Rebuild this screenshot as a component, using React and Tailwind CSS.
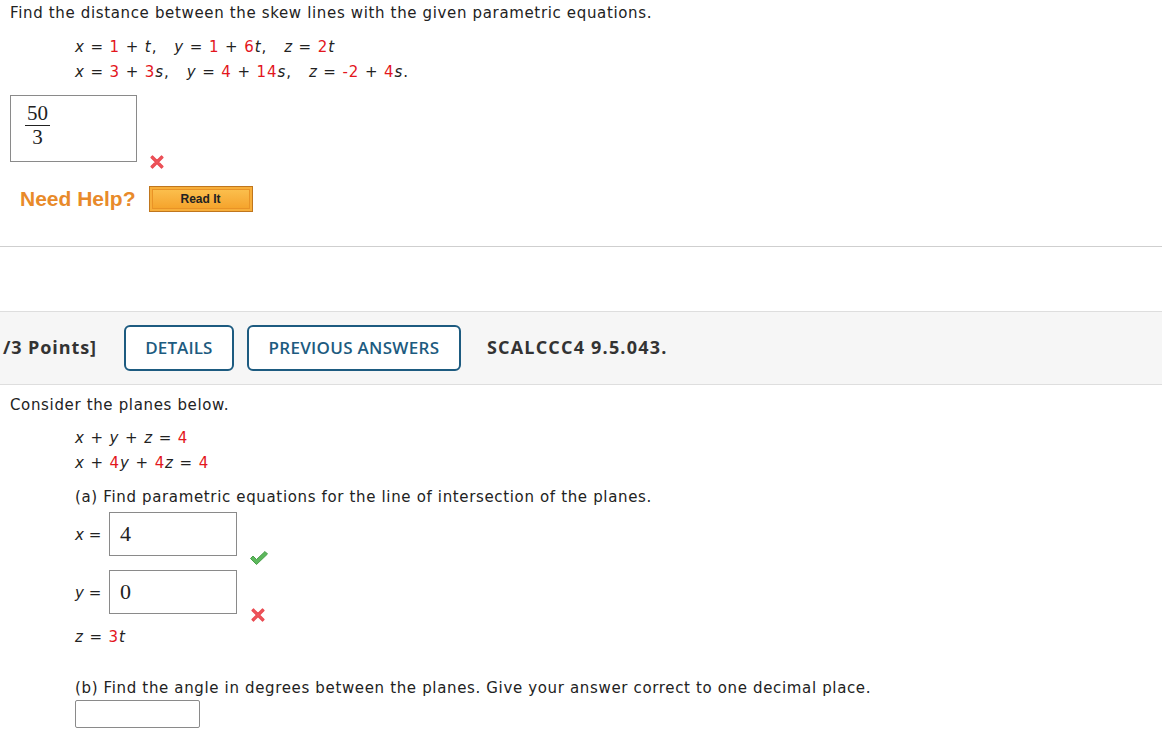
import React from "react";

const V = ({ children }) => <i className="italic">{children}</i>;
const R = ({ children }) => <span className="text-[#e3161d]">{children}</span>;

const Cross = ({ className }) => (
  <svg className={className} width="18" height="18" viewBox="0 0 18 18">
    <path d="M3 4.5 L4.5 3 L9 7.5 L13.5 3 L15 4.5 L10.5 9 L15 13.5 L13.5 15 L9 10.5 L4.5 15 L3 13.5 L7.5 9 Z" fill="#f0575e" stroke="#e94950" strokeWidth="1.2" strokeLinejoin="round" />
  </svg>
);

const Check = ({ className }) => (
  <svg className={className} width="20" height="16" viewBox="0 0 20 16">
    <path d="M1.5 8.5 L4 6 L7.5 9.5 L16 1.5 L18.5 4 L7.5 14.5 Z" fill="#5cb85c" stroke="#4a9f4a" strokeWidth="1" strokeLinejoin="round" />
  </svg>
);

const AnswerBox = ({ children, className }) => (
  <div className={"border border-[#8a8a8a] bg-white font-['Liberation_Serif',serif] text-[22px] text-[#222] " + className}>
    {children}
  </div>
);

export default function App() {
  return (
    <div className="min-h-screen bg-white font-['DejaVu_Sans',sans-serif] text-[15px] tracking-[0.65px] text-[#222] w-[1162px]">
      <div className="pl-[10px] pt-[3px]">
        <p className="leading-[20px]">Find the distance between the skew lines with the given parametric equations.</p>
        <div className="pl-[65px] mt-[12px] leading-[25px] tracking-[0.9px]">
          <div>
            <V>x</V> = <R>1</R> + <V>t</V>,&nbsp;&nbsp; <V>y</V> = <R>1</R> + <R>6</R><V>t</V>,&nbsp;&nbsp; <V>z</V> = <R>2</R><V>t</V>
          </div>
          <div>
            <V>x</V> = <R>3</R> + <R>3</R><V>s</V>,&nbsp;&nbsp; <V>y</V> = <R>4</R> + <R>14</R><V>s</V>,&nbsp;&nbsp; <V>z</V> = <R>-2</R> + <R>4</R><V>s</V>.
          </div>
        </div>
        <div className="flex items-end mt-[10px]">
          <AnswerBox className="w-[127px] h-[67px] pl-[14px] pt-0 tracking-normal">
            <div className="inline-flex flex-col items-center leading-[23px] text-[21px]">
              <span className="px-[2px]">50</span>
              <span className="block w-full border-t border-[#222]" />
              <span>3</span>
            </div>
          </AnswerBox>
          <Cross className="ml-[11px] mb-[-9px]" />
        </div>
        <div className="flex items-center mt-[21px] pl-[10px] tracking-normal">
          <span className="font-['Liberation_Sans',sans-serif] font-bold text-[21px] text-[#e88a2a]">Need Help?</span>
          <button className="ml-[13px] w-[104px] h-[26px] border border-[#c0761d] bg-[#f7ae3a] p-[2px]">
            <span className="flex items-center justify-center h-full border border-[#e99326] bg-gradient-to-b from-[#fbbe4c] to-[#f5a42c] font-['Liberation_Sans',sans-serif] font-bold text-[12px] text-[#222]">
              Read It
            </span>
          </button>
        </div>
      </div>

      <div className="mt-[31px] border-t border-[#cfcfcf]" />

      <div className="mt-[64px] h-[74px] bg-[#f6f6f6] border-y border-[#dedede] flex items-center font-['Open_Sans',sans-serif] font-bold text-[18px] tracking-[0.6px] text-[#333]">
        <span className="pl-[3px] tracking-[0.9px]">/3 Points]</span>
        <button className="ml-[27px] w-[110px] h-[46px] border-2 border-[#1d5b80] rounded-[6px] bg-white text-[#1d5b80] text-[17px] tracking-[0.1px] font-semibold">
          DETAILS
        </button>
        <button className="ml-[13px] w-[214px] h-[46px] border-2 border-[#1d5b80] rounded-[6px] bg-white text-[#1d5b80] text-[17px] tracking-[0.3px] font-semibold">
          PREVIOUS ANSWERS
        </button>
        <span className="ml-[26px] tracking-[1.2px]">SCALCCC4 9.5.043.</span>
      </div>

      <div className="pl-[10px] pt-[10px]">
        <p className="leading-[20px]">Consider the planes below.</p>
        <div className="pl-[65px] mt-[11px] leading-[25px] tracking-[0.9px]">
          <div>
            <V>x</V> + <V>y</V> + <V>z</V> = <R>4</R>
          </div>
          <div>
            <V>x</V> + <R>4</R><V>y</V> + <R>4</R><V>z</V> = <R>4</R>
          </div>
        </div>
        <div className="pl-[65px] mt-[11px]">
          <p className="leading-[20px]">(a) Find parametric equations for the line of intersection of the planes.</p>
          <div className="flex items-end mt-[5px]">
            <span className="w-[34px] mb-[9px] tracking-normal"><V>x</V> =</span>
            <AnswerBox className="w-[128px] h-[44px] pl-[10px] pt-[4px]">4</AnswerBox>
            <Check className="ml-[12px] mb-[-10px]" />
          </div>
          <div className="flex items-end mt-[14px]">
            <span className="w-[34px] mb-[9px] tracking-normal"><V>y</V> =</span>
            <AnswerBox className="w-[128px] h-[44px] pl-[10px] pt-[4px]">0</AnswerBox>
            <Cross className="ml-[12px] mb-[-10px]" />
          </div>
          <div className="mt-[13px] leading-[20px] tracking-[0.9px]">
            <V>z</V> = <R>3</R><V>t</V>
          </div>
          <p className="mt-[31px] leading-[20px]">(b) Find the angle in degrees between the planes. Give your answer correct to one decimal place.</p>
          <div className="mt-[2px] w-[125px] h-[28px] border border-[#8a8a8a] rounded-[2px] bg-white" />
        </div>
      </div>
    </div>
  );
}
